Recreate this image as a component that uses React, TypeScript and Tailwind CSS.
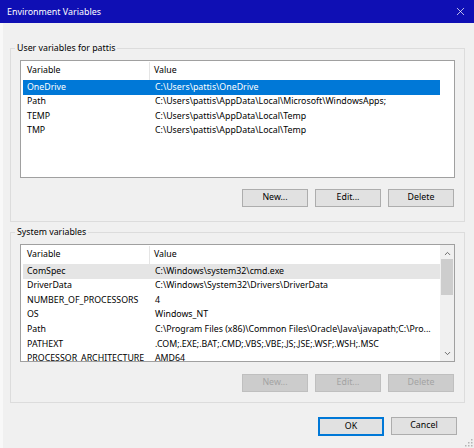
import { X, ChevronUp, ChevronDown } from 'lucide-react';

type EnvVar = { name: string; value: string };

const userVars: EnvVar[] = [
  { name: 'OneDrive', value: 'C:\\Users\\pattis\\OneDrive' },
  { name: 'Path', value: 'C:\\Users\\pattis\\AppData\\Local\\Microsoft\\WindowsApps;' },
  { name: 'TEMP', value: 'C:\\Users\\pattis\\AppData\\Local\\Temp' },
  { name: 'TMP', value: 'C:\\Users\\pattis\\AppData\\Local\\Temp' },
];

const systemVars: EnvVar[] = [
  { name: 'ComSpec', value: 'C:\\Windows\\system32\\cmd.exe' },
  { name: 'DriverData', value: 'C:\\Windows\\System32\\Drivers\\DriverData' },
  { name: 'NUMBER_OF_PROCESSORS', value: '4' },
  { name: 'OS', value: 'Windows_NT' },
  { name: 'Path', value: 'C:\\Program Files (x86)\\Common Files\\Oracle\\Java\\javapath;C:\\Pro...' },
  { name: 'PATHEXT', value: '.COM;.EXE;.BAT;.CMD;.VBS;.VBE;.JS;.JSE;.WSF;.WSH;.MSC' },
  { name: 'PROCESSOR_ARCHITECTURE', value: 'AMD64' },
];

const Button = ({
  label,
  disabled = false,
  focused = false,
}: {
  label: string;
  disabled?: boolean;
  focused?: boolean;
}) => (
  <button
    type="button"
    className={
      disabled
        ? 'w-[66px] h-[18px] border border-[#bfbfbf] bg-[#cccccc] text-[#a3a3a3]'
        : focused
          ? 'w-[66px] h-[19px] border-2 border-[#0078d7] bg-[#e1e1e1] text-black'
          : 'w-[66px] h-[18px] border border-[#adadad] bg-[#e1e1e1] text-black'
    }
  >
    {label}
  </button>
);

const VarList = ({
  rows,
  selected,
  selectedStyle,
  scroll = false,
}: {
  rows: EnvVar[];
  selected: number;
  selectedStyle: 'active' | 'inactive';
  scroll?: boolean;
}) => (
  <div className="flex h-[118px] w-[435px] border border-[#a0a0a0] bg-white">
    <div className="flex-1 overflow-hidden pl-[2px]">
      <div className="flex h-[19px] items-center pt-[1px]">
        <div className="flex h-full w-[127px] shrink-0 items-center border-r border-[#e5e5e5] pl-[4px]">
          Variable
        </div>
        <div className="pl-[4px]">Value</div>
      </div>
      {rows.map((row, i) => {
        const sel =
          i === selected
            ? selectedStyle === 'active'
              ? 'bg-[#0078d7] text-white'
              : 'bg-[#e5e5e5]'
            : '';
        return (
          <div
            key={row.name}
            className={`flex h-[14.6px] items-center whitespace-nowrap ${sel} ${scroll ? 'w-[418px]' : 'w-[417px]'}`}
          >
            <div className="w-[127px] shrink-0 pl-[4px]">{row.name}</div>
            <div className="pl-[5px]">{row.value}</div>
          </div>
        );
      })}
    </div>
    {scroll && (
      <div className="flex w-[14px] flex-col items-center bg-[#f0f0f0]">
        <ChevronUp size={9} strokeWidth={2.5} className="mt-[4px] text-[#606060]" />
        <div className="mt-[1px] h-[36px] w-[12px] bg-[#cdcdcd]" />
        <div className="flex-1" />
        <ChevronDown size={9} strokeWidth={2.5} className="mb-[3px] text-[#606060]" />
      </div>
    )}
  </div>
);

const Group = ({
  title,
  children,
  className,
}: {
  title: string;
  children: React.ReactNode;
  className: string;
}) => (
  <fieldset className={`border border-[#dcdcdc] ${className}`}>
    <legend className="-ml-[5px] px-[2px] leading-[12px]">{title}</legend>
    {children}
  </fieldset>
);

// dotted size grip in the lower right corner of the window
const SizeGrip = () => (
  <svg width="10" height="10" viewBox="0 0 10 10" className="absolute bottom-[1px] right-[1px]">
    {[
      [8, 2],
      [5, 5],
      [8, 5],
      [2, 8],
      [5, 8],
      [8, 8],
    ].map(([x, y]) => (
      <rect key={`${x}-${y}`} x={x} y={y} width="1.5" height="1.5" fill="#b4b4b4" />
    ))}
  </svg>
);

export default function App() {
  return (
    <div
      className="relative flex h-[448px] w-[474px] flex-col bg-[#f0f0f0] text-[8.8px] text-black"
      style={{ fontFamily: '"Segoe UI", "Noto Sans", sans-serif' }}
    >
      {/* title bar */}
      <div className="flex h-[23px] items-center justify-between bg-[#0f0fb4] pl-[7px] pr-[7px] text-[8.9px] text-white">
        <span>Environment Variables</span>
        <X size={13} strokeWidth={1.3} />
      </div>

      <div className="flex flex-1 flex-col border-l-[3px] border-[#f8f8f8] pl-[7px] pt-[19px]">
        <Group title="User variables for pattis" className="h-[180px] w-[453px] px-[9px]">
          <div className="mt-[6px]">
            <VarList rows={userVars} selected={0} selectedStyle="active" />
          </div>
          <div className="mt-[11px] flex justify-end gap-[7px] pr-[1px]">
            <Button label="New..." />
            <Button label="Edit..." />
            <Button label="Delete" />
          </div>
        </Group>

        <Group title="System variables" className="mt-[4px] h-[177px] w-[453px] px-[9px]">
          <div className="mt-[6px]">
            <VarList rows={systemVars} selected={0} selectedStyle="inactive" scroll />
          </div>
          <div className="mt-[12px] flex justify-end gap-[7px] pr-[1px]">
            <Button label="New..." disabled />
            <Button label="Edit..." disabled />
            <Button label="Delete" disabled />
          </div>
        </Group>

        <div className="mt-[14px] flex justify-end gap-[7px] pr-[17px]">
          <Button label="OK" focused />
          <Button label="Cancel" />
        </div>
      </div>
      <SizeGrip />
    </div>
  );
}
